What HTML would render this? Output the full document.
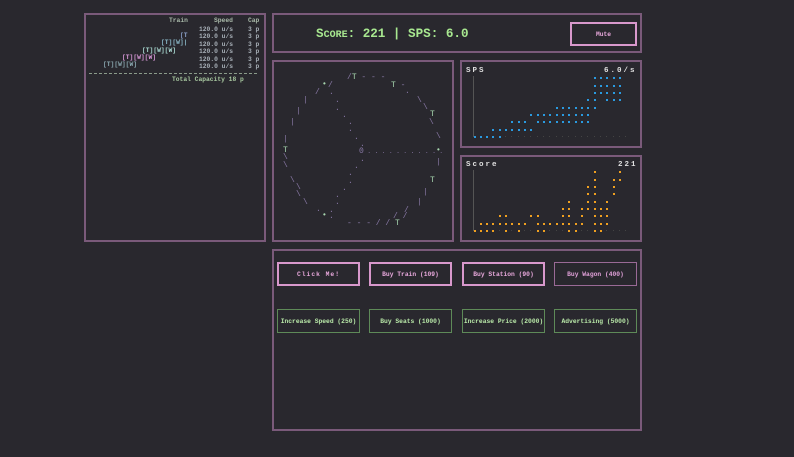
<!DOCTYPE html>
<html><head><meta charset="utf-8"><style>
*{margin:0;padding:0;box-sizing:border-box}
body{width:794px;height:457px;background:#29282e;position:relative;overflow:hidden;font-family:"Liberation Mono","DejaVu Sans Mono",monospace}
.p{position:absolute;border:2px solid #7a5a7a}
.t{position:absolute;white-space:pre;line-height:1}
.b{position:absolute;height:24px;display:flex;align-items:center;justify-content:center;font-size:6.3px;font-weight:bold;white-space:pre}
.pk{border:2px solid #d898cc;color:#e8a8dc}
.gr{border:1.5px solid #5e8a58;color:#b8e8a8}
.c{position:absolute;font-size:8px;color:#8a7aa8;line-height:1;white-space:pre}
.g{color:#a8d8b0}
.d{position:absolute;width:2px;height:2px}
</style></head><body>
<div class="p" style="left:84px;top:13px;width:182px;height:229px"></div>
<div class="p" style="left:272px;top:13px;width:370px;height:40px"></div>
<div class="p" style="left:272px;top:60px;width:182px;height:182px"></div>
<div class="p" style="left:460px;top:60px;width:182px;height:88px"></div>
<div class="p" style="left:460px;top:155px;width:182px;height:87px"></div>
<div class="p" style="left:272px;top:249px;width:370px;height:182px"></div>

<div style="position:absolute;left:0;top:18px;width:280px;font-size:6.3px;font-weight:bold;color:#a8b8a8">
<div class="t" style="left:169px;top:0">Train</div>
<div class="t" style="left:214px;top:0">Speed</div>
<div class="t" style="left:248px;top:0">Cap</div>
<div class="t" style="left:180px;top:15px;color:#8aa0c8">[T</div>
<div class="t" style="left:161px;top:22px;color:#8ab8c8">[T][W]|</div>
<div class="t" style="left:142px;top:30px;color:#a8d8d0">[T][W][W]</div>
<div class="t" style="left:122px;top:37px;color:#d898d8">[T][W][W]</div>
<div class="t" style="left:103px;top:44px;color:#8aa8b0">[T][W][W]</div>
<div class="t" style="left:199px;top:8px;line-height:7.4px;color:#a8b0b8">120.0 u/s
120.0 u/s
120.0 u/s
120.0 u/s
120.0 u/s
120.0 u/s</div>
<div class="t" style="left:248px;top:8px;line-height:7.4px;color:#a8b0b8">3 p
3 p
3 p
3 p
3 p
3 p</div>
<div style="position:absolute;left:89px;top:55px;width:168px;border-top:1px dashed #8a9a8a"></div>
<div class="t" style="left:172px;top:59px;color:#a8c8a0">Total Capacity 18 p</div>
</div>

<div class="t" style="left:316px;top:28px;font-size:12.6px;font-weight:bold;color:#a8e890">S<span style="font-size:10px">CORE</span>: 221 | SPS: 6.0</div>
<div class="b pk" style="left:570px;top:22px;width:67px;font-size:6.3px">Mute</div>

<div class="c" style="left:347px;top:74px">/<span class="g">T</span> - - -</div>
<div class="c g" style="left:391px;top:82px">T <span style="color:#8a7aa8">-</span></div>
<div class="c g" style="left:322px;top:81px">•</div>
<div class="c" style="left:328px;top:82px">/</div>
<div class="c" style="left:315px;top:89px">/</div>
<div class="c" style="left:329px;top:89px">.</div>
<div class="c" style="left:405px;top:88px">.</div>
<div class="c" style="left:303px;top:97px">|</div>
<div class="c" style="left:417px;top:97px">\</div>
<div class="c" style="left:335px;top:97px">.</div>
<div class="c" style="left:296px;top:108px">|</div>
<div class="c" style="left:423px;top:104px">\</div>
<div class="c g" style="left:430px;top:111px">T</div>
<div class="c" style="left:335px;top:105px">.</div>
<div class="c" style="left:342px;top:112px">.</div>
<div class="c" style="left:290px;top:119px">|</div>
<div class="c" style="left:429px;top:119px">\</div>
<div class="c" style="left:348px;top:119px">.</div>
<div class="c" style="left:348px;top:126px">.</div>
<div class="c" style="left:354px;top:134px">.</div>
<div class="c" style="left:283px;top:136px">|</div>
<div class="c" style="left:436px;top:133px">\</div>
<div class="c" style="left:360px;top:141px">.</div>
<div class="c g" style="left:283px;top:147px">T</div>
<div class="c" style="left:359px;top:148px">0<span style="font-size:6px"> . . . . . . . . . . .</span></div>
<div class="c g" style="left:436px;top:147px">•</div>
<div class="c" style="left:283px;top:154px">\</div>
<div class="c" style="left:283px;top:162px">\</div>
<div class="c" style="left:436px;top:159px">|</div>
<div class="c" style="left:360px;top:156px">.</div>
<div class="c" style="left:354px;top:163px">.</div>
<div class="c" style="left:290px;top:177px">\</div>
<div class="c g" style="left:430px;top:177px">T</div>
<div class="c" style="left:348px;top:170px">.</div>
<div class="c" style="left:348px;top:178px">.</div>
<div class="c" style="left:296px;top:184px">\</div>
<div class="c" style="left:423px;top:189px">|</div>
<div class="c" style="left:342px;top:185px">.</div>
<div class="c" style="left:296px;top:191px">\</div>
<div class="c" style="left:335px;top:192px">.</div>
<div class="c" style="left:303px;top:199px">\</div>
<div class="c" style="left:417px;top:199px">|</div>
<div class="c" style="left:335px;top:199px">.</div>
<div class="c" style="left:404px;top:207px">/</div>
<div class="c" style="left:316px;top:206px">.</div>
<div class="c" style="left:329px;top:207px">.</div>
<div class="c g" style="left:322px;top:212px">•</div>
<div class="c" style="left:329px;top:213px">.</div>
<div class="c" style="left:393px;top:213px">/ /</div>
<div class="c" style="left:347px;top:220px">- - - / / <span class="g">T</span></div>

<div class="t" style="left:466px;top:68px;font-size:7.5px;color:#e0e0e0;font-weight:bold;letter-spacing:2px">SPS</div>
<div class="t" style="left:604px;top:68px;font-size:7.5px;color:#e0e0e0;font-weight:bold;letter-spacing:2px">6.0/s</div>
<div class="t" style="left:466px;top:162px;font-size:7.5px;color:#e0e0e0;font-weight:bold;letter-spacing:2px">Score</div>
<div class="t" style="left:618px;top:162px;font-size:7.5px;color:#e0e0e0;font-weight:bold;letter-spacing:2px">221</div>
<div style="position:absolute;left:473px;top:76px;width:1px;height:61px;background:#555"></div>
<div style="position:absolute;left:473px;top:170px;width:1px;height:61px;background:#555"></div>
<div id="ch"></div>

<div class="b pk" style="left:277px;top:262px;width:83px;letter-spacing:1px">Click Me!</div>
<div class="b pk" style="left:369px;top:262px;width:83px">Buy Train (109)</div>
<div class="b pk" style="left:462px;top:262px;width:83px">Buy Station (90)</div>
<div class="b" style="left:554px;top:262px;width:83px;border:1.5px solid #9a6a96;color:#e0a0d8">Buy Wagon (400)</div>
<div class="b gr" style="left:277px;top:309px;width:83px">Increase Speed (250)</div>
<div class="b gr" style="left:369px;top:309px;width:83px">Buy Seats (1000)</div>
<div class="b gr" style="left:462px;top:309px;width:83px">Increase Price (2000)</div>
<div class="b gr" style="left:554px;top:309px;width:83px">Advertising (5000)</div>

<script>
var sps=[[0],[0],[0],[0,1],[0,1],[1],[1,2],[1,2],[1,2],[1,3],[2,3],[2,3],[2,3],[2,3,4],[2,3,4],[2,3,4],[2,3,4],[2,3,4],[2,3,4,5],[4,5,6,7,8],[6,7,8],[5,6,7,8],[5,6,7,8],[5,6,7,8]];
var sc=[[0],[0,1],[0,1],[0,1],[1,2],[0,1,2],[1],[0,1],[1],[2],[0,1,2],[0,1],[1],[1],[1,2,3],[0,1,2,3,4],[0,1],[1,2,3],[3,4,5,6],[0,1,2,3,4,5,6,7,8],[0,1,2,3],[1,2,3,4],[5,6,7],[7,8]];
var h='';
function draw(d,base,col){for(var i=0;i<25;i++){var x=473.5+i*6.33;var cs=d[i]||[];if(cs.indexOf(0)<0)h+='<div class="d" style="left:'+x+'px;top:'+base+'px;background:#444;width:1px;height:1px"></div>';cs.forEach(function(r){h+='<div class="d" style="left:'+x+'px;top:'+(base-r*7.33)+'px;background:'+col+'"></div>';});}}
draw(sps,136,'#2a9ae0');draw(sc,230,'#f0a020');
document.getElementById('ch').innerHTML=h;
</script>
</body></html>
